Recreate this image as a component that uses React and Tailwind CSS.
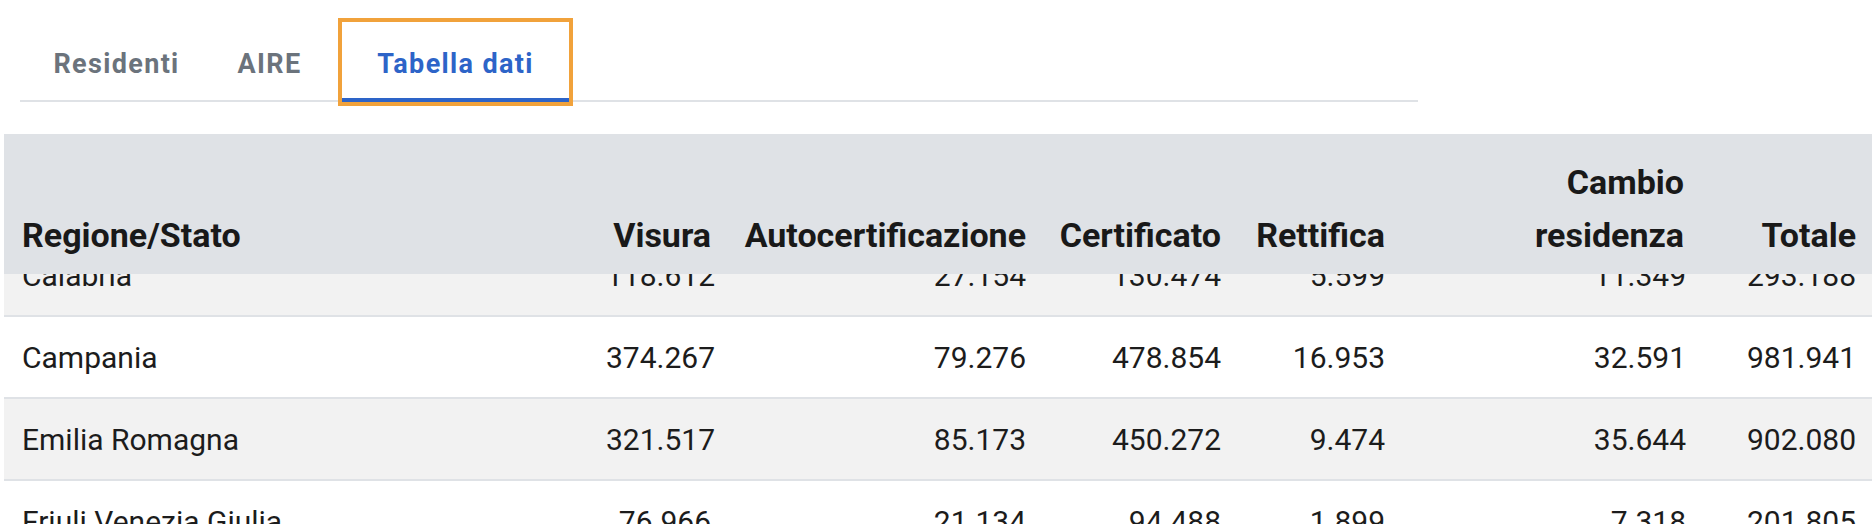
import React from 'react';

const tabs = [
  { label: 'Residenti', width: 'w-[193px]' },
  { label: 'AIRE', width: 'w-[113px] mr-[16px]' },
  { label: 'Tabella dati', width: 'w-[227px]', active: true },
];

const columns = [
  { label: 'Regione/Stato', align: 'left' },
  { label: 'Visura' },
  { label: 'Autocertificazione' },
  { label: 'Certificato' },
  { label: 'Rettifica' },
  { label: 'Cambio residenza', wrap: true },
  { label: 'Totale' },
];

const rows = [
  ['Calabria', '118.612', '27.154', '130.474', '5.599', '11.349', '293.188'],
  ['Campania', '374.267', '79.276', '478.854', '16.953', '32.591', '981.941'],
  ['Emilia Romagna', '321.517', '85.173', '450.272', '9.474', '35.644', '902.080'],
  ['Friuli Venezia Giulia', '76.966', '21.134', '94.488', '1.899', '7.318', '201.805'],
];

const gridCols = 'grid grid-cols-[586px_137px_315px_195px_164px_301px_170px]';

const App = () => {
  return (
    <div className="h-[526px] w-[1872px] overflow-hidden bg-white font-['Roboto',sans-serif] text-[#1c1c1c]">
      {/* Schede */}
      <div className="pt-[22px] pl-[20px]">
        <nav className="flex w-[1398px] border-b-2 border-[#dfe2e6]">
          {tabs.map((tab) => (
            <button
              key={tab.label}
              className={
                tab.active
                  ? `${tab.width} h-[80px] flex items-center justify-center pt-[8px] border-b-4 border-[#2d64c8] text-[#2d64c8] text-[27px] font-bold tracking-[0.05em] outline-4 outline-[#f1a23b] -mb-[2px]`
                  : `${tab.width} h-[80px] flex items-center justify-center pt-[8px] border-b-4 border-transparent text-[#6b737c] text-[27px] font-bold tracking-[0.05em] -mb-[2px]`
              }
            >
              {tab.label}
            </button>
          ))}
        </nav>
      </div>

      {/* Tabella */}
      <div className="mt-[32px] ml-[4px] w-[1868px]">
        <div className={`${gridCols} h-[140px] bg-[#dfe2e6] items-end pb-[12px] text-[34px] leading-[53px] font-bold text-[#191919]`}>
          {columns.map((col) => (
            <div
              key={col.label}
              className={
                col.align === 'left'
                  ? 'px-[18px] whitespace-nowrap'
                  : col.wrap
                  ? 'px-[18px] text-right'
                  : 'px-[16px] flex justify-end whitespace-nowrap'
              }
            >
              {col.label}
            </div>
          ))}
        </div>

        <div className="h-[250px] overflow-hidden">
          <div className="-mt-[39px]">
            {rows.map((row, i) => (
              <div
                key={row[0]}
                className={`${gridCols} h-[82px] border-b-2 border-[#dfe2e6] items-center pt-[1px] text-[30px] ${
                  i % 2 === 0 ? 'bg-[#f2f2f2]' : 'bg-white'
                }`}
              >
                {row.map((cell, j) => (
                  <div
                    key={j}
                    className={j === 0 ? 'px-[18px] whitespace-nowrap' : 'px-[16px] text-right whitespace-nowrap'}
                  >
                    {cell}
                  </div>
                ))}
              </div>
            ))}
          </div>
        </div>
      </div>
    </div>
  );
};

export default App;
